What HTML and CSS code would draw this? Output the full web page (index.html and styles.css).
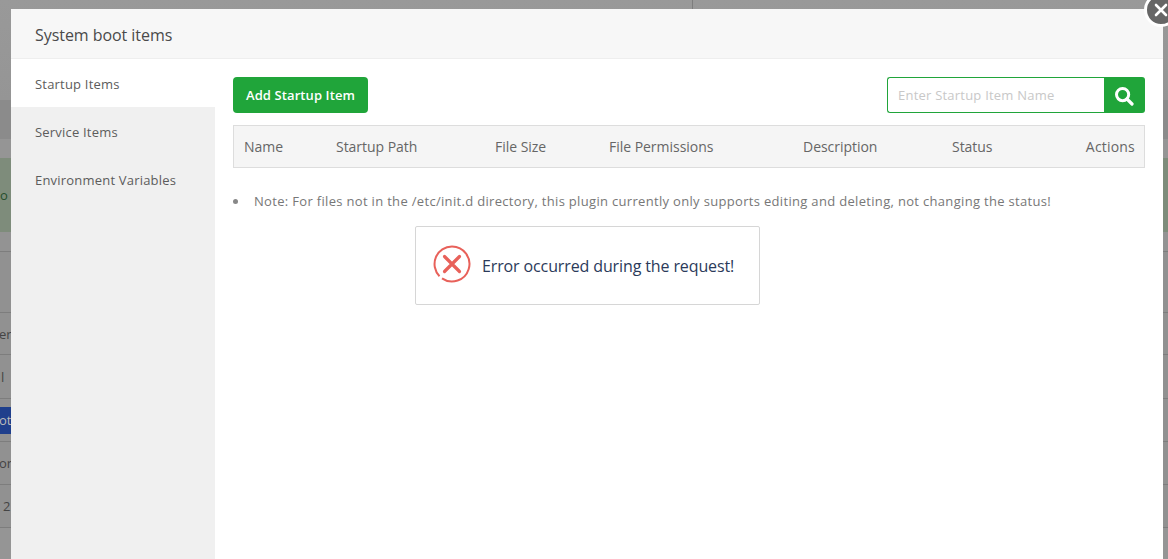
FILE: index.html
```html
<!DOCTYPE html>
<html lang="en">
<head>
<meta charset="utf-8">
<title>System boot items</title>
<link rel="stylesheet" href="styles.css">
</head>
<body>
<div class="backdrop" aria-hidden="true">
  <div class="bd-top"><span class="bd-vline"></span></div>
  <div class="bd-band"></div>
  <div class="bd-gap"></div>
  <div class="bd-alert"><span>o</span></div>
  <div class="bd-gap2"></div>
  <div class="bd-row bd-r1"></div>
  <div class="bd-row bd-r2"><span>er</span></div>
  <div class="bd-row bd-r3"><span>l</span></div>
  <div class="bd-row bd-r4"><span class="bd-blue">ot</span></div>
  <div class="bd-row bd-r5"><span>or</span></div>
  <div class="bd-row bd-r6"><span>2</span></div>
</div>

<section class="modal">
  <header class="modal-title">System boot items</header>
  <div class="modal-body">
    <nav class="side">
      <a class="side-item active">Startup Items</a>
      <a class="side-item">Service Items</a>
      <a class="side-item">Environment Variables</a>
    </nav>
    <main class="content">
      <div class="toolbar">
        <button class="btn-add">Add Startup Item</button>
        <div class="search">
          <input class="search-input" type="text" placeholder="Enter Startup Item Name">
          <button class="search-btn" aria-label="Search">
            <svg width="20" height="20" viewBox="0 0 20 20"><circle cx="8.6" cy="8.6" r="6.1" fill="none" stroke="#fff" stroke-width="3"/><path d="M13 13l5 5" stroke="#fff" stroke-width="3.2" stroke-linecap="round"/></svg>
          </button>
        </div>
      </div>
      <div class="thead">
        <span>Name</span>
        <span>Startup Path</span>
        <span>File Size</span>
        <span>File Permissions</span>
        <span>Description</span>
        <span>Status</span>
        <span class="th-right">Actions</span>
      </div>
      <ul class="notes">
        <li>Note: For files not in the /etc/init.d directory, this plugin currently only supports editing and deleting, not changing the status!</li>
      </ul>
    </main>
  </div>
  <div class="toast">
    <svg class="toast-icon" width="38" height="38" viewBox="0 0 38 38"><path d="M19 1.5A17.5 17.5 0 1 1 9 33.4" fill="none" stroke="#e8615a" stroke-width="2"/><path d="M6.5 31.2A17.5 17.5 0 0 1 19 1.5" fill="none" stroke="#e8615a" stroke-width="2"/><path d="M11.5 11.5l15 15M26.5 11.5l-15 15" stroke="#e8615a" stroke-width="3.2" stroke-linecap="round"/></svg>
    <span>Error occurred during the request!</span>
  </div>
  <button class="close" aria-label="Close">
    <svg width="14" height="14" viewBox="0 0 14 14"><path d="M2 2l10 10M12 2L2 12" stroke="#fff" stroke-width="2.6" stroke-linecap="round"/></svg>
  </button>
</section>
</body>
</html>
```
FILE: styles.css
```css
* { box-sizing: border-box; }
html, body { margin: 0; height: 100%; overflow: hidden; }
body { position: relative; background: #959595; font-family: "Open Sans", "Noto Sans", sans-serif; color: #555; }

.backdrop { height: 559px; overflow: hidden; }
.bd-top { height: 100px; background: linear-gradient(#999, #959595); position: relative; }
.bd-vline { position: absolute; left: 692px; top: 0; width: 1px; height: 9px; background: #7d7d7d; }
.bd-band { height: 39px; background: #8b8b8b; }
.bd-gap { height: 19px; background: #959595; }
.bd-alert { height: 74px; background: #7e8c7b; color: #254f2b; display: flex; align-items: center; font-size: 13px; line-height: 1; }
.bd-gap2 { height: 20px; background: #939393; border-bottom: 1px solid #7d7d7d; }
.bd-row { border-bottom: 1px solid #7d7d7d; background: #919191; font-size: 13px; color: #444; display: flex; align-items: center; }
.bd-r1 { height: 61px; }
.bd-r2 { height: 42px; }
.bd-r3 { height: 44px; }
.bd-r4 { height: 43px; }
.bd-r5 { height: 43px; }
.bd-r6 { height: 43px; }
.bd-r2 span { margin-left: -1px; }
.bd-r3 span { margin-left: 1px; }
.bd-r5 span { margin-left: -1px; }
.bd-r6 span { margin-left: 3px; }
.bd-blue { background: #1f3f8c; color: #bbb; width: 11px; height: 27px; line-height: 27px; overflow: hidden; white-space: nowrap; text-indent: -1px; }

.modal { position: absolute; left: 11px; top: 9px; width: 1152px; height: 550px; background: #fff; display: flex; flex-direction: column; }
.modal-title { height: 50px; flex: none; background: #f7f7f7; border-bottom: 1px solid #eee; padding-left: 24px; font-size: 16px; line-height: 52px; color: #4a4a4a; letter-spacing: -0.05px; }
.modal-body { flex: 1; display: flex; min-height: 0; }

.side { width: 204px; flex: none; background: #f0f0f0; display: flex; flex-direction: column; }
.side-item { height: 48px; line-height: 50px; padding-left: 24px; font-size: 13px; color: #5c5c5c; letter-spacing: 0.2px; }
.side-item.active { background: #fff; }

.content { flex: 1; padding: 18px 18px 0; }
.toolbar { display: flex; justify-content: space-between; height: 36px; }
.btn-add { width: 135px; height: 36px; border: 0; border-radius: 4px; background: #20a53a; color: #fff; font: 600 13px "Open Sans", sans-serif; letter-spacing: 0.1px; padding: 0; }
.search { display: flex; width: 258px; height: 36px; }
.search-input { width: 217px; height: 36px; border: 1px solid #20a53a; border-right: 0; border-radius: 3px 0 0 3px; padding: 0 10px; font: 13px "Open Sans", sans-serif; letter-spacing: 0.22px; color: #555; outline: 0; background: #fff; }
.search-input::placeholder { color: #c8c8c8; opacity: 1; }
.search-btn { width: 41px; height: 36px; border: 0; padding: 2px 2px 0 0; border-radius: 0 3px 3px 0; background: #20a53a; display: flex; align-items: center; justify-content: center; }

.thead { margin-top: 12px; height: 43px; border: 1px solid #ddd; background: #f5f5f5; padding: 0 9px 0 10px; display: grid; grid-template-columns: 92px 159px 114px 194px 149px 1fr auto; align-items: center; font-size: 14px; color: #666; letter-spacing: -0.03px; }
.th-right { text-align: right; letter-spacing: 0.2px; }

.notes { margin: 24px 0 0; padding: 0; list-style: none; font-size: 13px; line-height: 18px; color: #777; letter-spacing: 0.32px; }
.notes li { display: flex; align-items: center; gap: 16px; }
.notes li::before { content: ""; flex: none; width: 5px; height: 5px; border-radius: 50%; background: #888; }

.toast { position: absolute; left: 404px; top: 217px; width: 345px; height: 79px; background: #fff; border: 1px solid #d6d6d6; border-radius: 2px; display: flex; align-items: center; padding-left: 17px; font-size: 16px; color: #2b3a5a; letter-spacing: -0.12px; }
.toast-icon { flex: none; margin: -3px 11px 0 0; }

.close { position: absolute; left: 1133px; top: -16px; width: 34px; height: 34px; border-radius: 50%; border: 3px solid #fff; background: #666; padding: 0; display: flex; align-items: center; justify-content: center; }
```
